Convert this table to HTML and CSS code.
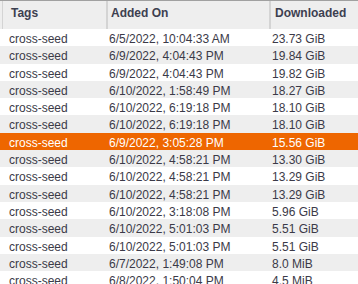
FILE: index.html
```html
<!DOCTYPE html>
<html>
<head>
<meta charset="utf-8">
<link rel="stylesheet" href="styles.css">
</head>
<body>
<div class="table">
  <div class="head">
    <div class="hcell edge"></div>
    <div class="hcell tags">Tags</div>
    <div class="hcell added">Added On</div>
    <div class="hcell dl">Downloaded</div>
  </div>
  <div class="row"><div class="cell">cross-seed</div><div class="cell">6/5/2022, 10:04:33 AM</div><div class="cell">23.73 GiB</div></div>
  <div class="row alt"><div class="cell">cross-seed</div><div class="cell">6/9/2022, 4:04:43 PM</div><div class="cell">19.84 GiB</div></div>
  <div class="row"><div class="cell">cross-seed</div><div class="cell">6/9/2022, 4:04:43 PM</div><div class="cell">19.82 GiB</div></div>
  <div class="row alt"><div class="cell">cross-seed</div><div class="cell">6/10/2022, 1:58:49 PM</div><div class="cell">18.27 GiB</div></div>
  <div class="row"><div class="cell">cross-seed</div><div class="cell">6/10/2022, 6:19:18 PM</div><div class="cell">18.10 GiB</div></div>
  <div class="row alt"><div class="cell">cross-seed</div><div class="cell">6/10/2022, 6:19:18 PM</div><div class="cell">18.10 GiB</div></div>
  <div class="row sel"><div class="cell">cross-seed</div><div class="cell">6/9/2022, 3:05:28 PM</div><div class="cell">15.56 GiB</div></div>
  <div class="row alt"><div class="cell">cross-seed</div><div class="cell">6/10/2022, 4:58:21 PM</div><div class="cell">13.30 GiB</div></div>
  <div class="row"><div class="cell">cross-seed</div><div class="cell">6/10/2022, 4:58:21 PM</div><div class="cell">13.29 GiB</div></div>
  <div class="row alt"><div class="cell">cross-seed</div><div class="cell">6/10/2022, 4:58:21 PM</div><div class="cell">13.29 GiB</div></div>
  <div class="row"><div class="cell">cross-seed</div><div class="cell">6/10/2022, 3:18:08 PM</div><div class="cell">5.96 GiB</div></div>
  <div class="row alt"><div class="cell">cross-seed</div><div class="cell">6/10/2022, 5:01:03 PM</div><div class="cell">5.51 GiB</div></div>
  <div class="row"><div class="cell">cross-seed</div><div class="cell">6/10/2022, 5:01:03 PM</div><div class="cell">5.51 GiB</div></div>
  <div class="row alt"><div class="cell">cross-seed</div><div class="cell">6/7/2022, 1:49:08 PM</div><div class="cell">8.0 MiB</div></div>
  <div class="row"><div class="cell">cross-seed</div><div class="cell">6/8/2022, 1:50:04 PM</div><div class="cell">4.5 MiB</div></div>
</div>
</body>
</html>
```
FILE: styles.css
```css
html, body {
  margin: 0;
  padding: 0;
  background: #ffffff;
  overflow: hidden;
}
.table {
  font-family: "Liberation Sans", Arial, sans-serif;
  font-size: 12px;
  color: #3b3a48;
  width: 358px;
}
.head {
  display: grid;
  grid-template-columns: 3px 103px 163px 1fr;
  height: 29px;
  line-height: 25px;
  background: #eeeeee;
  border-top: 1px solid #a0a0a0;
  box-sizing: border-box;
  font-weight: bold;
  color: #3d4050;
  white-space: nowrap;
  overflow: hidden;
}
.hcell {
  overflow: hidden;
}
.hcell.edge {
  border-right: 1px solid #d4d4d4;
}
.hcell.tags {
  padding-left: 8px;
}
.hcell.added,
.hcell.dl {
  border-left: 2px solid #d4d4d4;
  padding-left: 3px;
}
.hcell.dl {
  padding-left: 4px;
}
.row {
  display: grid;
  grid-template-columns: 6px 100px 163px 1fr;
  height: 17.3px;
  line-height: 17.3px;
  background: #ffffff;
  white-space: nowrap;
}
.row::before {
  content: "";
}
.cell {
  padding-left: 3px;
  padding-top: 2px;
  height: 17.3px;
  box-sizing: border-box;
}
.row.alt {
  background: #eeeeee;
}
.row.sel {
  background: #ee6600;
  color: #ffffff;
}
```
